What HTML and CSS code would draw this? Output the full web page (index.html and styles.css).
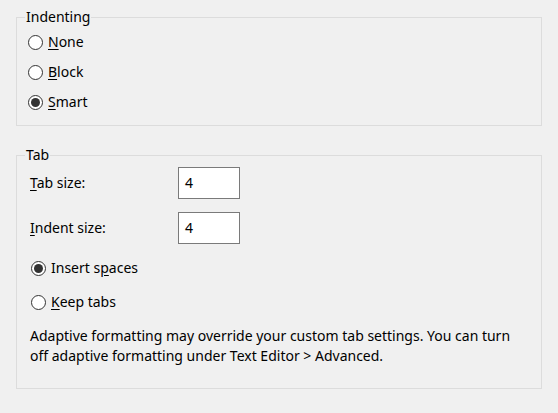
FILE: index.html
```html
<!DOCTYPE html>
<html>
<head>
<meta charset="utf-8">
<link rel="stylesheet" href="styles.css">
</head>
<body>
<div class="page">
  <fieldset class="group group-indent">
    <legend class="legend">Indenting</legend>
    <div class="group-body indent-body">
      <div class="radio-row"><span class="radio"></span><span class="label"><u>N</u>one</span></div>
      <div class="radio-row"><span class="radio"></span><span class="label"><u>B</u>lock</span></div>
      <div class="radio-row"><span class="radio checked"></span><span class="label"><u>S</u>mart</span></div>
    </div>
  </fieldset>
  <fieldset class="group group-tab">
    <legend class="legend">Tab</legend>
    <div class="group-body tab-body">
      <div class="field-row first"><span class="field-label"><u>T</u>ab size:</span><span class="textbox">4</span></div>
      <div class="field-row"><span class="field-label"><u>I</u>ndent size:</span><span class="textbox">4</span></div>
      <div class="radio-row tall first-radio"><span class="radio checked"></span><span class="label">Insert s<u>p</u>aces</span></div>
      <div class="radio-row tall"><span class="radio"></span><span class="label"><u>K</u>eep tabs</span></div>
      <p class="note">Adaptive formatting may override your custom tab settings. You can turn off adaptive formatting under Text Editor &gt; Advanced.</p>
    </div>
  </fieldset>
</div>
</body>
</html>
```
FILE: styles.css
```css
html, body {
  margin: 0;
  padding: 0;
  background: #f0f0f0;
}
body {
  font-family: "Noto Sans", "Open Sans", sans-serif;
  font-size: 14px;
  line-height: 20px;
  color: #000;
}
.page {
  padding: 7px 16px 0 16px;
}
.group {
  margin: 0;
  padding: 0;
  border: 1px solid #dcdcdc;
  min-width: 0;
}
.group-tab {
  margin-top: 19px;
}
.legend {
  margin-left: 8px;
  padding: 0 1px;
  line-height: 20px;
  height: 20px;
}
.indent-body {
  padding: 0 0 8px 11px;
}
.tab-body {
  padding: 0 0 22px 13px;
}
.radio-row {
  display: flex;
  align-items: center;
  height: 30px;
}
.radio-row.tall {
  height: 34px;
}
.tab-body .radio-row {
  padding-left: 1px;
}
.first-radio {
  margin-top: 7px;
}
.radio {
  box-sizing: border-box;
  width: 15px;
  height: 15px;
  border: 1px solid #333;
  border-radius: 50%;
  background: #fff;
  display: flex;
  align-items: center;
  justify-content: center;
  margin-right: 5px;
  flex: none;
}
.radio.checked::after {
  content: "";
  width: 9px;
  height: 9px;
  border-radius: 50%;
  background: #333;
}
.field-row {
  display: flex;
  align-items: center;
  height: 32px;
  margin-top: 13px;
}
.field-row.first {
  margin-top: 2px;
}
.field-label {
  width: 148px;
  flex: none;
}
.textbox {
  box-sizing: border-box;
  width: 62px;
  height: 32px;
  border: 1px solid #7a7a7a;
  background: #fff;
  padding-left: 6px;
  display: flex;
  align-items: center;
}
.note {
  margin: 7px 0 0 0;
  width: 500px;
}
u {
  text-decoration-thickness: 1px;
  text-underline-offset: 2px;
}
```
